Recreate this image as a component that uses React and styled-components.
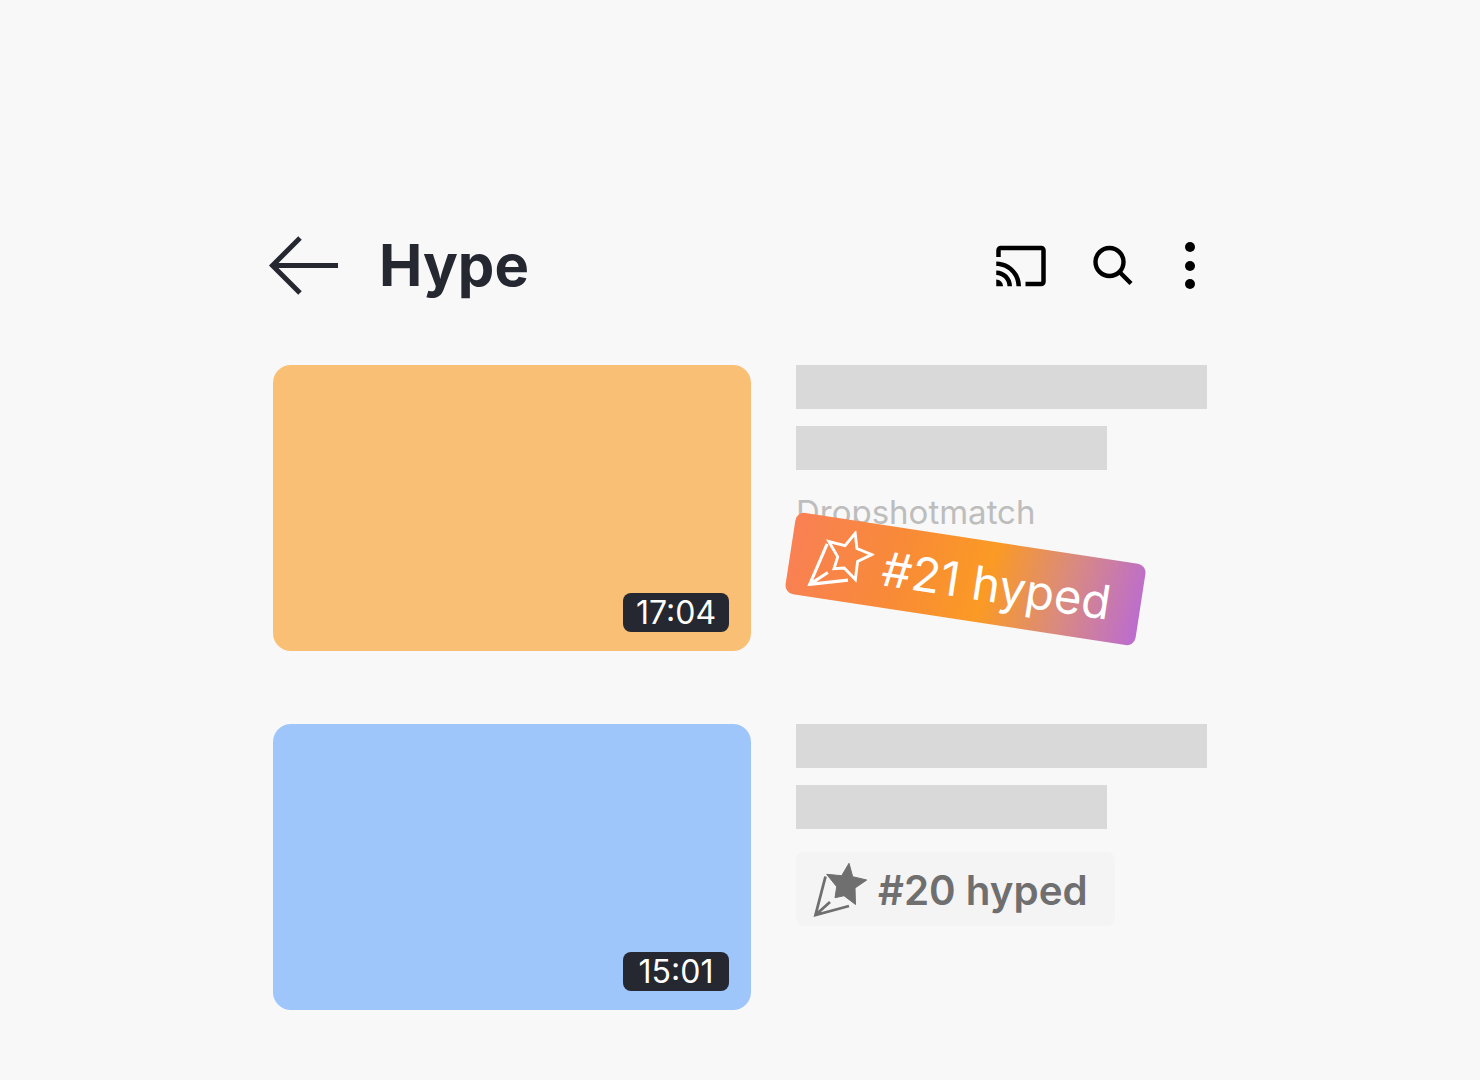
import React from 'react'
import styled, { createGlobalStyle } from 'styled-components';

const GlobalStyle = createGlobalStyle`
  html, body {
    margin: 0;
    background: #f8f8f8;
  }
  body {
    font-family: Inter, "Liberation Sans", sans-serif;
  }
`;

const Page = styled.div`
  width: 934px;
  height: 1080px;
  box-sizing: border-box;
  margin-left: 273px;
  padding-top: 235px;
`;

const Header = styled.header`
  display: flex;
  align-items: center;
  height: 62px;
  margin-bottom: 68px;
`;

const BackIcon = styled.svg`
  width: 70px;
  height: 62px;
  margin-left: -5px;
  flex: none;
`;

const Title = styled.h1`
  margin: 0 0 0 41px;
  flex: 1;
  font-size: 58px;
  font-weight: 700;
  line-height: 60px;
  height: 62px;
  color: #252831;
`;

const Actions = styled.div`
  display: flex;
  align-items: center;
  margin-right: -10px;
`;

const ActionIcon = styled.svg`
  display: block;
  width: ${({ size }) => size}px;
  height: ${({ size }) => size}px;
  margin-left: ${({ gap }) => gap || 0}px;
  fill: #000;
`;

const List = styled.div`
  display: flex;
  flex-direction: column;
  gap: 73px;
`;

const Row = styled.article`
  display: flex;
  gap: 45px;
`;

const Thumb = styled.div`
  position: relative;
  flex: none;
  width: 478px;
  height: 286px;
  border-radius: 18px;
  background: ${({ color }) => color};
`;

const Duration = styled.span`
  position: absolute;
  right: 22px;
  bottom: 19px;
  width: 106px;
  height: 39px;
  border-radius: 8px;
  background: #252831;
  color: #fff;
  font-size: 32px;
  line-height: 39px;
  text-align: center;
`;

const Info = styled.div`
  position: relative;
  flex: 1;
  display: flex;
  flex-direction: column;
  align-items: flex-start;
`;

const Bar = styled.div`
  width: ${({ width }) => width}px;
  height: 44px;
  margin-bottom: 17px;
  background: #d9d9d9;
`;

const Channel = styled.div`
  margin-top: 3px;
  font-size: 33px;
  line-height: 44px;
  color: #bdbdbd;
`;

const Chip = styled.div`
  display: flex;
  align-items: center;
  width: 319px;
  height: 74px;
  box-sizing: border-box;
  margin-top: 6px;
  padding-left: 17px;
  border-radius: 8px;
  background: #f4f4f4;
  color: #6f6f6f;
  font-size: 40.3px;
  font-weight: 600;
  white-space: nowrap;
`;

// the new rank pops over the channel name
const HypedChip = styled(Chip)`
  position: absolute;
  top: 177px;
  left: 10px;
  margin: 0;
  padding-left: 19px;
  background: linear-gradient(97deg, #f98055 0%, #f88a38 30%, #fb9a24 56%, #d98a80 78%, #bb6cd0 100%);
  color: #fff;
  font-size: 42.6px;
  font-weight: 400;
  transform: rotate(8.7deg) scale(1.11);
`;

const ChipLabel = styled.span`
  padding-top: 2px;
`;

const StarSvg = styled.svg`
  flex: none;
  width: 56px;
  height: 56px;
  margin-right: 9px;
`;

const STAR = '44,8.3 47.7,21.7 61.7,25 50,33 50.5,49.5 39,40.7 30,42.7 31.7,31.7 21.7,19.3 36.7,20.7';

const ShootingStar = ({ outline, color }) => (
  <StarSvg viewBox="8 6 56 56" aria-hidden="true">
    <polygon
      points={STAR}
      fill={outline ? 'none' : color}
      stroke={color}
      strokeWidth={outline ? 2.6 : 1}
      strokeLinejoin="miter"
    />
    <path
      d="M20.5 21.5 L10.5 60 L44 51 M10.5 60 L25 47"
      fill="none"
      stroke={color}
      strokeWidth="2.8"
    />
  </StarSvg>
);

const Back = () => (
  <BackIcon viewBox="0 0 70 62" aria-hidden="true">
    <path
      d="M32 3 L4.5 30.5 L32 58 M4.5 30.5 H70"
      fill="none"
      stroke="#252831"
      strokeWidth="5"
    />
  </BackIcon>
);

const Cast = () => (
  <ActionIcon size={54} viewBox="0 0 24 24" aria-hidden="true">
    <path d="M21 3H3c-1.1 0-2 .9-2 2v3h2V5h18v14h-7v2h7c1.1 0 2-.9 2-2V5c0-1.1-.9-2-2-2zM1 18v3h3c0-1.66-1.34-3-3-3zm0-4v2c2.76 0 5 2.24 5 5h2c0-3.87-3.13-7-7-7zm0-4v2c4.97 0 9 4.03 9 9h2c0-6.08-4.93-11-11-11z" />
  </ActionIcon>
);

const Search = () => (
  <ActionIcon size={54} gap={37} viewBox="0 0 54 54" aria-hidden="true">
    <circle cx="24.5" cy="23" r="14" fill="none" stroke="#000" strokeWidth="4.4" />
    <path d="M34.5 33 L46 44.5" fill="none" stroke="#000" strokeWidth="4.4" />
  </ActionIcon>
);

const More = () => (
  <ActionIcon size={54} gap={24} viewBox="0 0 54 54" aria-hidden="true">
    <circle cx="27" cy="8" r="5" />
    <circle cx="27" cy="27" r="5" />
    <circle cx="27" cy="45" r="5" />
  </ActionIcon>
);

export default function App() {
  return (
    <Page>
      <GlobalStyle />
      <Header>
        <Back />
        <Title>Hype</Title>
        <Actions>
          <Cast />
          <Search />
          <More />
        </Actions>
      </Header>
      <List>
        <Row>
          <Thumb color="#f9bf75">
            <Duration>17:04</Duration>
          </Thumb>
          <Info>
            <Bar width={411} />
            <Bar width={311} />
            <Channel>Dropshotmatch</Channel>
            <HypedChip>
              <ShootingStar outline color="#fff" />
              <ChipLabel>#21 hyped</ChipLabel>
            </HypedChip>
          </Info>
        </Row>
        <Row>
          <Thumb color="#9ec6fa">
            <Duration>15:01</Duration>
          </Thumb>
          <Info>
            <Bar width={411} />
            <Bar width={311} />
            <Chip>
              <ShootingStar color="#6f6f6f" />
              <ChipLabel>#20 hyped</ChipLabel>
            </Chip>
          </Info>
        </Row>
      </List>
    </Page>
  );
}
